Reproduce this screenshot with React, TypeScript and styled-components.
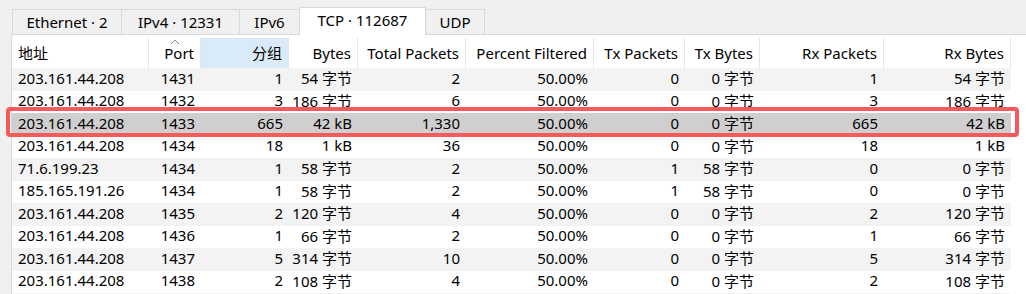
import styled, { createGlobalStyle } from "styled-components";

const GlobalStyle = createGlobalStyle`
  html, body {
    margin: 0;
    padding: 0;
    background: #f0f0f0;
  }
  body {
    font-family: "Noto Sans", "Noto Sans CJK SC", sans-serif;
    font-size: 15px;
    color: #000;
    overflow: hidden;
  }
`;

const Window = styled.div`
  position: relative;
  width: 1026px;
  height: 294px;
  overflow: hidden;
  padding-left: 11px;
  box-sizing: border-box;
`;

const TabBar = styled.div`
  display: flex;
  align-items: flex-end;
  height: 34px;
  padding-left: 2px;
  box-sizing: border-box;
`;

const Tab = styled.div<{ $w: number; $active?: boolean }>`
  position: relative;
  z-index: ${({ $active }) => ($active ? 2 : 1)};
  width: ${({ $w }) => $w}px;
  height: ${({ $active }) => ($active ? 28 : 25)}px;
  margin-left: -1px;
  margin-bottom: ${({ $active }) => ($active ? -1 : 0)}px;
  box-sizing: border-box;
  display: flex;
  align-items: center;
  justify-content: center;
  padding-bottom: ${({ $active }) => ($active ? 3 : 1)}px;
  border: 1px solid #d9d9d9;
  border-bottom: none;
  background: ${({ $active }) => ($active ? "#fff" : "#f0f0f0")};
  white-space: nowrap;
`;

const Panel = styled.div`
  background: #fff;
  border-top: 1px solid #d9d9d9;
  border-left: 1px solid #d9d9d9;
  height: 260px;
  padding-top: 3px;
  box-sizing: border-box;
`;

const columns = "137px 52px 88px 69px 108px 128px 91px 75px 124px 127px";

const HeaderRow = styled.div`
  display: grid;
  grid-template-columns: ${columns};
  height: 30px;
`;

const HeaderCell = styled.div<{ $left?: boolean; $sorted?: boolean }>`
  position: relative;
  display: flex;
  align-items: center;
  justify-content: ${({ $left }) => ($left ? "flex-start" : "flex-end")};
  padding: 0 6px 1px;
  border-right: 1px solid #e5e5e5;
  background: ${({ $sorted }) => ($sorted ? "#d9ebf9" : "#fff")};
  white-space: nowrap;
  overflow: hidden;
`;

const SortArrow = styled.svg`
  position: absolute;
  top: 1px;
  left: 50%;
  margin-left: -5px;
`;

const Row = styled.div<{ $striped?: boolean; $selected?: boolean }>`
  display: grid;
  grid-template-columns: ${columns};
  height: 22.5px;
  width: 999px;
  background: ${({ $striped, $selected }) =>
    $selected ? "#cfcfcf" : $striped ? "#f3f3f3" : "#fff"};
`;

const Cell = styled.div<{ $left?: boolean }>`
  display: flex;
  align-items: center;
  justify-content: ${({ $left }) => ($left ? "flex-start" : "flex-end")};
  padding: 0 6px 3px;
  white-space: nowrap;
  overflow: hidden;
`;

const Highlight = styled.div`
  position: absolute;
  left: 6px;
  top: 107px;
  width: 1013px;
  height: 30px;
  box-sizing: border-box;
  border: 4px solid #f75a5a;
  border-radius: 4px;
  pointer-events: none;
`;

const tabs = [
  { label: "Ethernet · 2", w: 110 },
  { label: "IPv4 · 12331", w: 119 },
  { label: "IPv6", w: 61 },
  { label: "TCP · 112687", w: 127, active: true },
  { label: "UDP", w: 60 },
];

const headers = [
  "地址",
  "Port",
  "分组",
  "Bytes",
  "Total Packets",
  "Percent Filtered",
  "Tx Packets",
  "Tx Bytes",
  "Rx Packets",
  "Rx Bytes",
];

const A = "203.161.44.208";

const rows: string[][] = [
  [A, "1431", "1", "54 字节", "2", "50.00%", "0", "0 字节", "1", "54 字节"],
  [A, "1432", "3", "186 字节", "6", "50.00%", "0", "0 字节", "3", "186 字节"],
  [A, "1433", "665", "42 kB", "1,330", "50.00%", "0", "0 字节", "665", "42 kB"],
  [A, "1434", "18", "1 kB", "36", "50.00%", "0", "0 字节", "18", "1 kB"],
  ["71.6.199.23", "1434", "1", "58 字节", "2", "50.00%", "1", "58 字节", "0", "0 字节"],
  ["185.165.191.26", "1434", "1", "58 字节", "2", "50.00%", "1", "58 字节", "0", "0 字节"],
  [A, "1435", "2", "120 字节", "4", "50.00%", "0", "0 字节", "2", "120 字节"],
  [A, "1436", "1", "66 字节", "2", "50.00%", "0", "0 字节", "1", "66 字节"],
  [A, "1437", "5", "314 字节", "10", "50.00%", "0", "0 字节", "5", "314 字节"],
  [A, "1438", "2", "108 字节", "4", "50.00%", "0", "0 字节", "2", "108 字节"],
  ["", "", "", "", "", "", "", "", "", ""],
];

const SELECTED = 2;

export default function App() {
  return (
    <Window>
      <GlobalStyle />
      <TabBar>
        {tabs.map((t) => (
          <Tab key={t.label} $w={t.w} $active={t.active}>
            {t.label}
          </Tab>
        ))}
      </TabBar>
      <Panel>
        <HeaderRow>
          {headers.map((h, i) => (
            <HeaderCell key={h} $left={i === 0} $sorted={i === 2}>
              {i === 1 && (
                <SortArrow width="10" height="6" viewBox="0 0 10 6">
                  <path d="M1 5 L5 1 L9 5" fill="none" stroke="#8a8a8a" strokeWidth="1" />
                </SortArrow>
              )}
              {h}
            </HeaderCell>
          ))}
        </HeaderRow>
        {rows.map((r, ri) => (
          <Row key={ri} $striped={ri % 2 === 0} $selected={ri === SELECTED}>
            {r.map((c, ci) => (
              <Cell key={ci} $left={ci === 0}>
                {c}
              </Cell>
            ))}
          </Row>
        ))}
      </Panel>
      <Highlight />
    </Window>
  );
}
